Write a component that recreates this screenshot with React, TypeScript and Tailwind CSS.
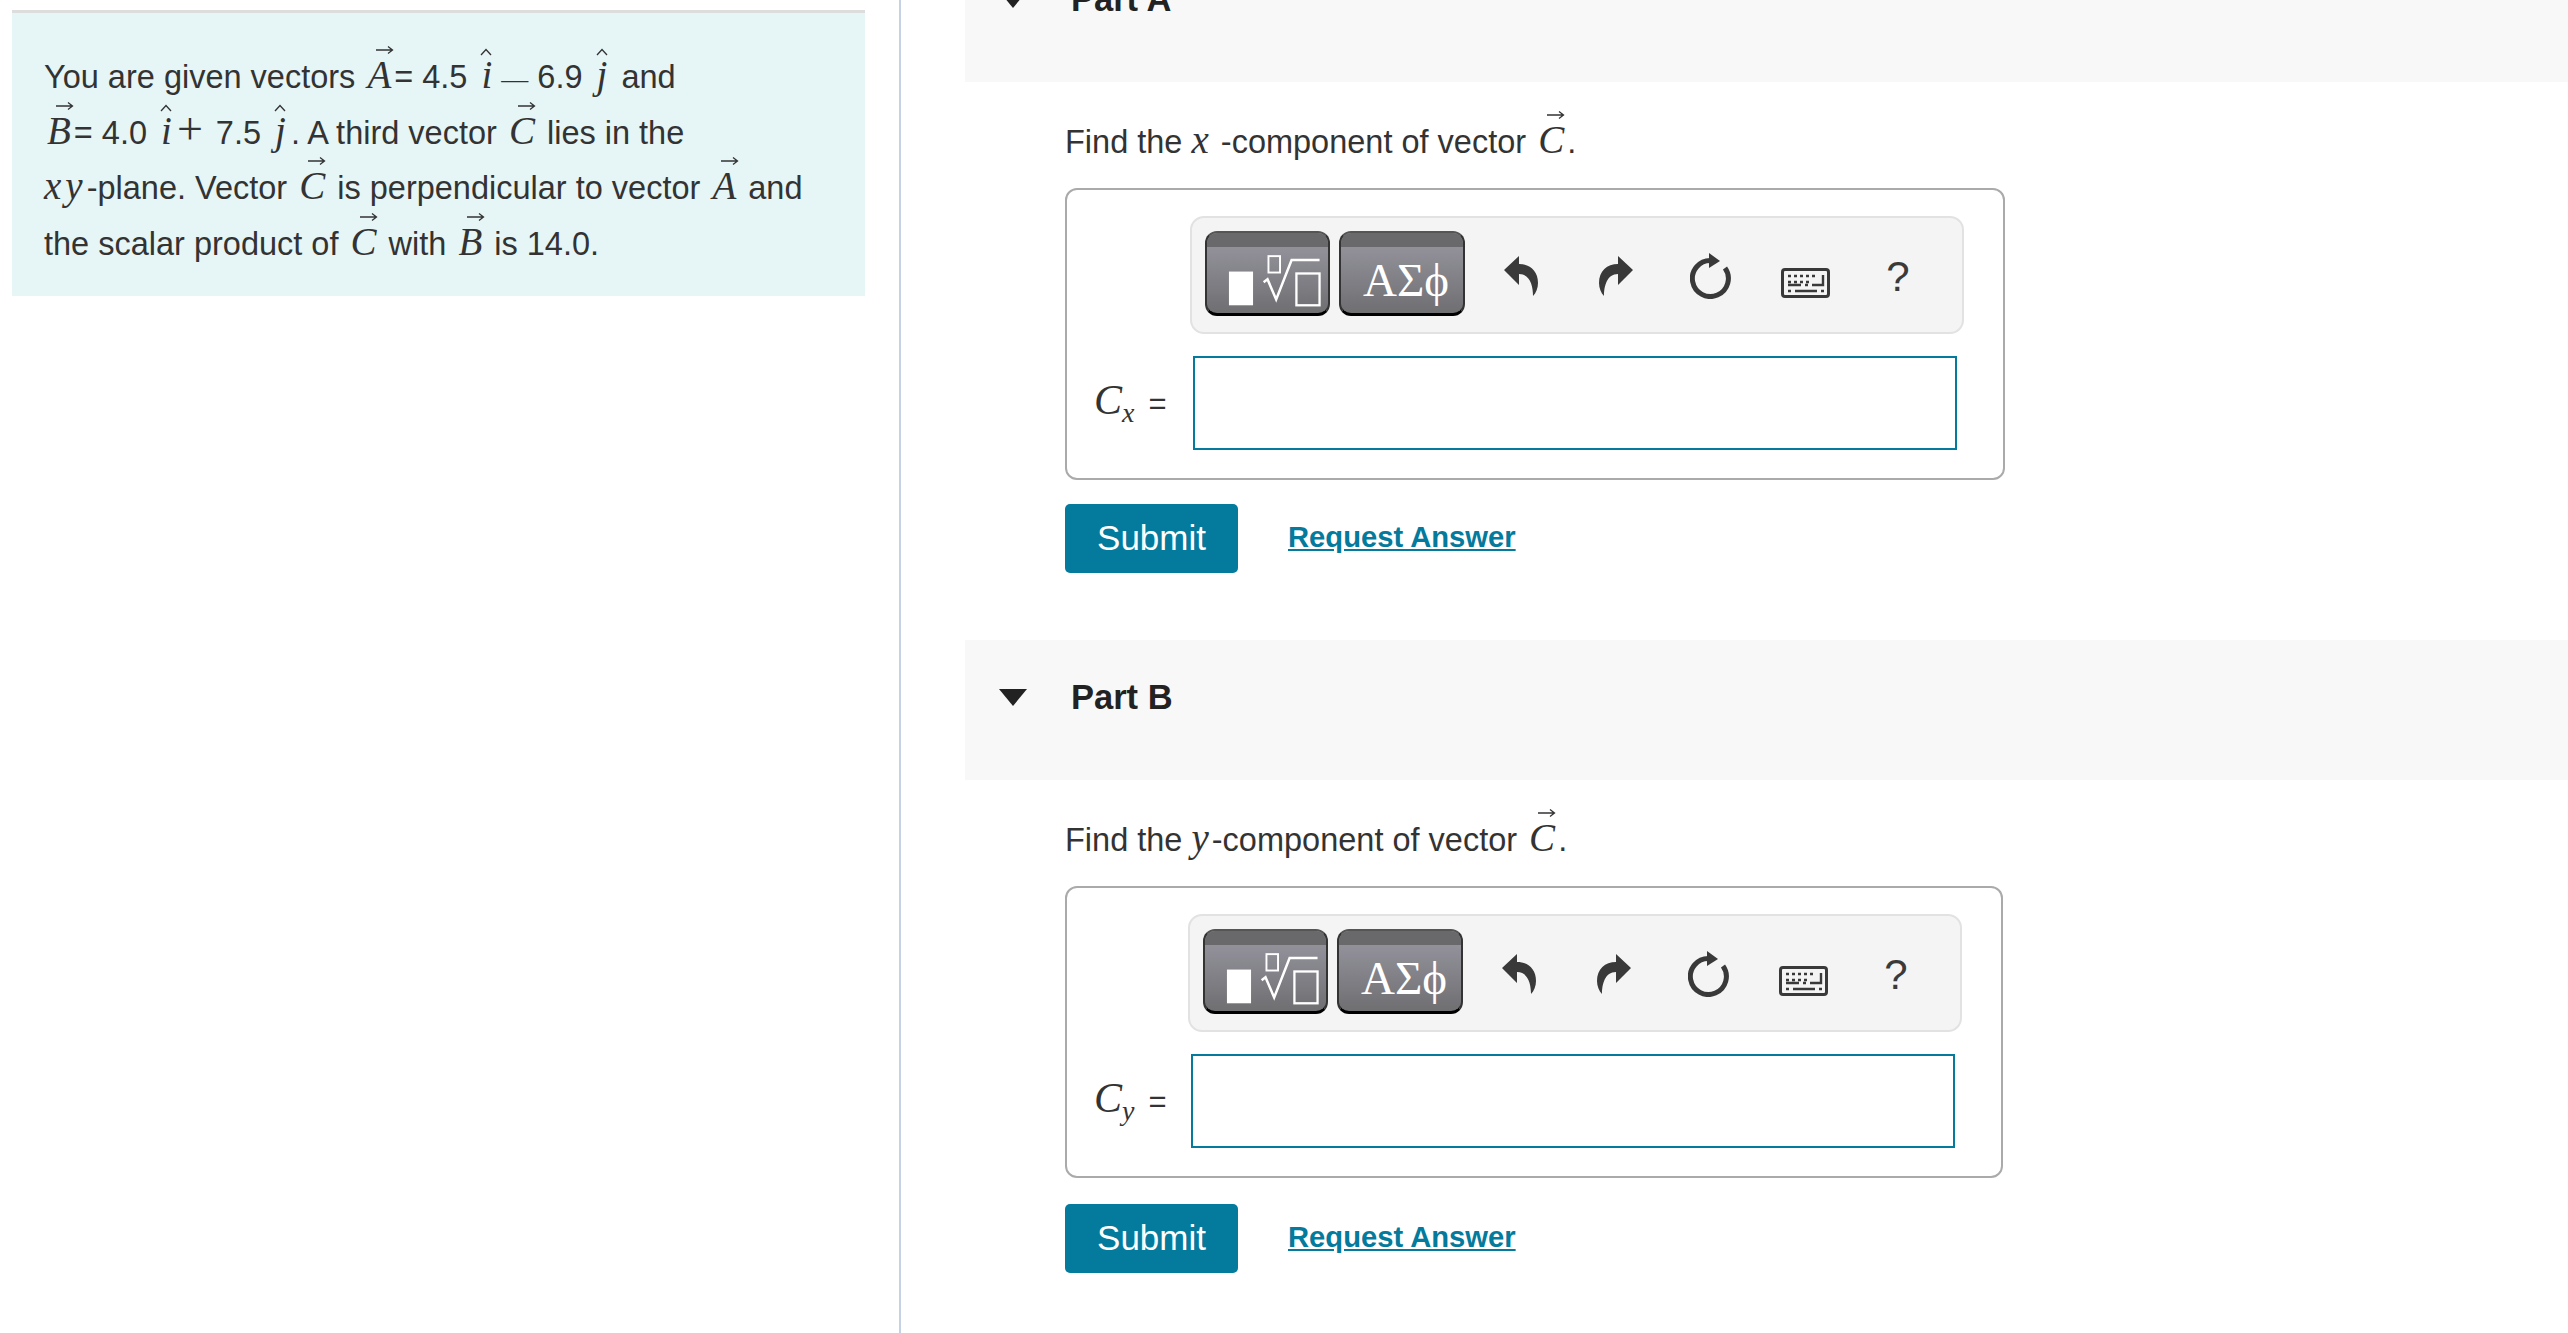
const mathFont = "font-['Liberation_Serif',serif] italic text-[39px] leading-none";

function Vec({ children }: { children: string }) {
  return (
    <span className={`relative ml-[3px] inline-block tracking-[3px] ${mathFont}`}>
      {children}
      <svg viewBox="0 0 18 10" className="absolute left-[9px] top-[-10px] h-[10px] w-[18px]">
        <path d="M0 5H16M12 1.5L16.5 5L12 8.5" fill="none" stroke="#333" strokeWidth="1.3" />
      </svg>
    </span>
  );
}

function Hat({ children }: { children: string }) {
  return (
    <span className={`relative mx-[5px] inline-block ${mathFont}`}>
      {children}
      <svg viewBox="0 0 12 8" className="absolute left-[-1px] top-[-7px] h-[8px] w-[12px]">
        <path d="M1 7L6 1.5L11 7" fill="none" stroke="#333" strokeWidth="1.3" />
      </svg>
    </span>
  );
}

function Undo({ flip }: { flip?: boolean }) {
  return (
    <svg viewBox="0 0 34 40" className={`mt-[5px] h-[40px] w-[34px] ${flip ? "-scale-x-100" : ""}`}>
      <path
        d="M0 14L15 0V8C26 8 34 15 34 27C34 32 32 37 29 40C29 30 26 18 15 18V29Z"
        fill="#393939"
      />
    </svg>
  );
}

function Reset() {
  return (
    <svg viewBox="0 0 41 46" className="mt-[2px] h-[46px] w-[41px]">
      <path d="M21 7.5A18 18 0 1 0 35 15" fill="none" stroke="#393939" strokeWidth="5" />
      <path d="M19 0L30 8L19 15Z" fill="#393939" />
    </svg>
  );
}

function Keyboard() {
  return (
    <svg viewBox="0 0 49 30" className="mt-[17px] h-[30px] w-[49px]">
      <rect x="1.5" y="1.5" width="46" height="27" rx="2.5" fill="none" stroke="#393939" strokeWidth="3" />
      <path
        d="M7 8H10M13 8H16M19 8H22M25 8H28M31 8H34M7 14H10M13 14H16M19 14H22M25 14H28M7 17H20M24 17H27M31 17H42V7M7 23H10M14 23H36M40 23H43"
        fill="none"
        stroke="#393939"
        strokeWidth="2.4"
      />
    </svg>
  );
}

function TemplateIcon() {
  return (
    <svg viewBox="0 0 124 83" className="absolute inset-0 h-full w-full">
      <rect x="22" y="40" width="25" height="35" fill="#fff" />
      <rect x="63" y="24" width="12" height="17" fill="none" stroke="#fff" strokeWidth="2" />
      <path d="M58 51L62 48L71 69L87 28H116" fill="none" stroke="#fff" strokeWidth="2.6" />
      <rect x="92" y="42" width="24" height="33" fill="none" stroke="#fff" strokeWidth="2.4" />
    </svg>
  );
}

function ToolButton({ children, width }: { children: React.ReactNode; width: string }) {
  return (
    <div
      className={`relative mb-[3px] h-[85px] overflow-hidden rounded-[12px] border-x-[2px] border-t-[2px] border-b-[3px] border-x-[#333] border-t-[#555] border-b-black bg-gradient-to-b from-[#9a99a3] to-[#6f6f72] ${width}`}
    >
      <div className="h-[14px] bg-[#69696b]" />
      {children}
    </div>
  );
}

function Toolbar({ className }: { className: string }) {
  return (
    <div
      className={`flex h-[118px] items-center rounded-[14px] border-[2px] border-[#e2e2e2] bg-[#f4f4f4] pl-[13px] ${className}`}
    >
      <ToolButton width="w-[125px]">
        <TemplateIcon />
      </ToolButton>
      <div className="w-[9px]" />
      <ToolButton width="w-[126px]">
        <div className="flex h-[66px] items-center justify-center pl-[8px] font-['Liberation_Serif',serif] text-[47px] leading-none text-white">
          ΑΣϕ
        </div>
      </ToolButton>
      <div className="ml-[8px] flex">
        <div className="flex w-[95px] justify-center"><Undo /></div>
        <div className="flex w-[95px] justify-center"><Undo flip /></div>
        <div className="flex w-[95px] justify-center"><Reset /></div>
        <div className="flex w-[95px] justify-center"><Keyboard /></div>
        <div className="mt-[5px] flex w-[90px] justify-center text-[42px] leading-none text-[#3a3a3a]">?</div>
      </div>
    </div>
  );
}

function Part({
  name,
  question,
  sub,
  boxWidth,
  toolbarOffset,
  inputWidth,
  gapBelowQuestion,
  gapAboveSubmit,
}: {
  name: string;
  question: React.ReactNode;
  sub: string;
  boxWidth: string;
  toolbarOffset: string;
  inputWidth: string;
  gapBelowQuestion: string;
  gapAboveSubmit: string;
}) {
  return (
    <section>
      <div className="flex h-[140px] items-center bg-[#f8f8f8] pb-[25px] pl-[34px]">
        <svg viewBox="0 0 28 17" className="mr-[44px] h-[17px] w-[28px]">
          <path d="M0 0H28L14 17Z" fill="#222" />
        </svg>
        <h2 className="text-[34.5px] font-bold text-[#222]">{name}</h2>
      </div>
      <div className="pl-[100px]">
        <p className={`h-[84px] whitespace-nowrap pt-[36px] text-[32.5px] leading-[48px] text-[#333] ${gapBelowQuestion}`}>
          {question}
        </p>
        <div className={`rounded-[12px] border-[2px] border-[#aaaaaa] pt-[26px] pb-[28px] ${boxWidth}`}>
          <Toolbar className={toolbarOffset} />
          <div className="mt-[22px] flex items-center pl-[27px]">
            <span className="flex-1 whitespace-nowrap pb-[4px] text-[31px] text-[#333]">
              <span className="font-['Liberation_Serif',serif] text-[42px] italic">C</span>
              <span className="align-[-8px] font-['Liberation_Serif',serif] text-[28px] italic">{sub}</span>
              <span className="ml-[14px]">=</span>
            </span>
            <div className={`h-[94px] border-[2px] border-[#047a9c] bg-white ${inputWidth}`} />
            <div className="w-[46px]" />
          </div>
        </div>
        <div className={`flex items-center ${gapAboveSubmit}`}>
          <button className="h-[69px] w-[173px] rounded-[5px] bg-[#047a9c] text-[35px] text-white">Submit</button>
          <a className="mb-[2px] ml-[50px] text-[29.2px] font-bold text-[#047a9c] underline">Request Answer</a>
        </div>
      </div>
    </section>
  );
}

export default function App() {
  return (
    <div className="flex h-[1333px] overflow-hidden bg-white font-['Liberation_Sans',sans-serif]">
      <aside className="w-[899px] shrink-0 pl-[12px] pt-[10px]">
        <div className="h-[286px] w-[853px] border-t-[3px] border-[#dddddd] bg-[#e6f6f6] pl-[32px] pr-[20px] pt-[37px] text-[32.5px] leading-[55.5px] text-[#333]">
          <div className="h-[55.5px] whitespace-nowrap">
            You are given vectors <Vec>A</Vec>= 4.5 <Hat>i</Hat>
            <span className="ml-[4px] font-['Liberation_Serif',serif] text-[27px] leading-none">—</span> 6.9 <Hat>j</Hat> and
          </div>
          <div className="h-[55.5px] whitespace-nowrap">
            <Vec>B</Vec>= 4.0 <Hat>i</Hat>
            <span className="mr-[4px] font-['Liberation_Serif',serif] text-[46px] leading-none">+</span> 7.5 <Hat>j</Hat>. A third vector <Vec>C</Vec> lies in the
          </div>
          <div className="h-[55.5px] whitespace-nowrap">
            <span className={`tracking-[4px] ${mathFont}`}>xy</span>-plane. Vector <Vec>C</Vec> is perpendicular to vector <Vec>A</Vec> and
          </div>
          <div className="h-[55.5px] whitespace-nowrap">
            the scalar product of <Vec>C</Vec> with <Vec>B</Vec> is 14.0.
          </div>
        </div>
      </aside>
      <main className="flex-1 border-l-[2px] border-[#c5d2e6] pl-[64px]">
        <div className="mt-[-58px] mb-[67px]">
          <Part
            name="Part A"
            sub="x"
            boxWidth="w-[940px]"
            toolbarOffset="ml-[123px] mr-[39px]"
            inputWidth="w-[764px]"
            gapBelowQuestion="mb-[22px]"
            gapAboveSubmit="mt-[24px]"
            question={
              <>
                Find the <span className={`tracking-[3px] ${mathFont}`}>x</span> -component of vector <Vec>C</Vec>.
              </>
            }
          />
        </div>
        <Part
          name="Part B"
          sub="y"
          boxWidth="w-[938px]"
          toolbarOffset="ml-[121px] mr-[39px]"
          inputWidth="w-[764px]"
          gapBelowQuestion="mb-[22px]"
          gapAboveSubmit="mt-[26px]"
          question={
            <>
              Find the <span className={`tracking-[3px] ${mathFont}`}>y</span>-component of vector <Vec>C</Vec>.
            </>
          }
        />
      </main>
    </div>
  );
}
